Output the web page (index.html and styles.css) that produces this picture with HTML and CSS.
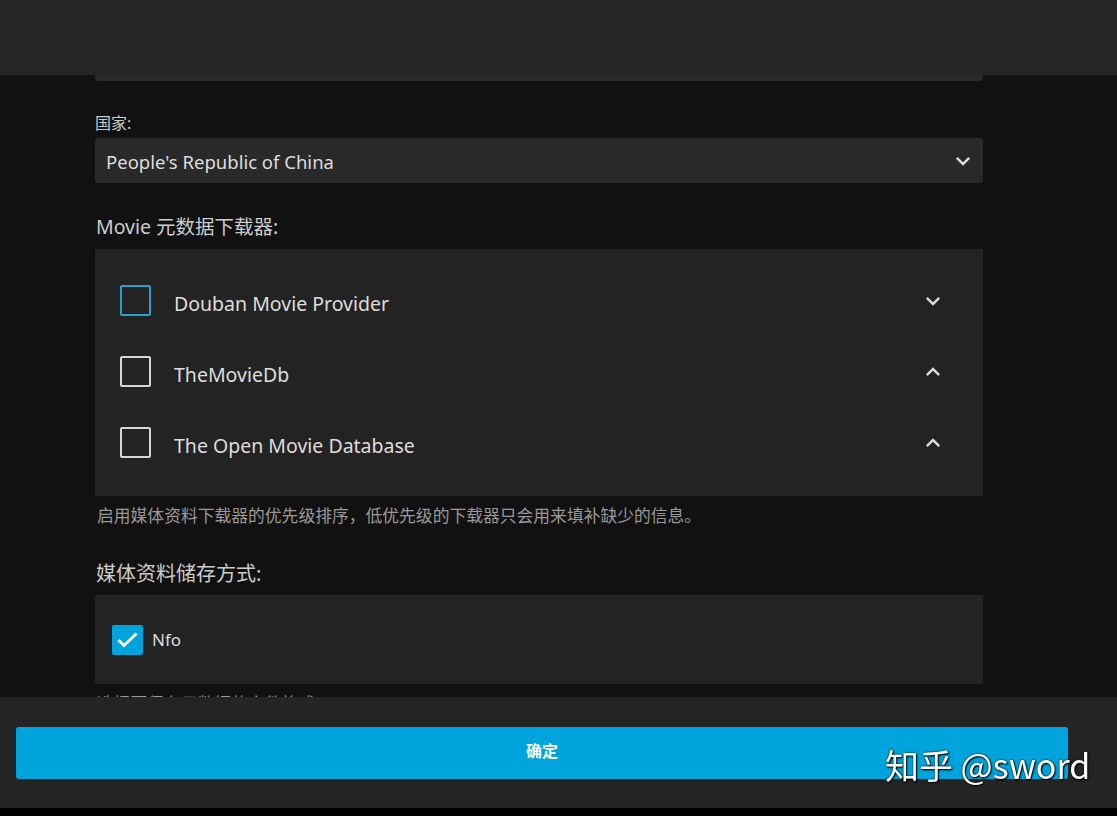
FILE: index.html
```html
<!DOCTYPE html>
<html lang="zh-CN">
<head>
    <meta charset="UTF-8">
    <meta name="viewport" content="width=device-width, initial-scale=1.0">
    <title>媒体库设置</title>
    <link rel="stylesheet" href="styles.css">
</head>
<body>

<div class="header"></div>

<div class="content">
    <div class="field-stub"></div>

    <label class="field-label">国家:</label>
    <div class="select">
        <span>People's Republic of China</span>
        <svg class="chevron" viewBox="0 0 24 24"><path d="M16.59 8.59L12 13.17 7.41 8.59 6 10l6 6 6-6z"/></svg>
    </div>

    <h3 class="section-title">Movie 元数据下载器:</h3>
    <div class="check-list">
        <div class="check-row">
            <span class="checkbox checkbox-focus"></span>
            <span class="check-text">Douban Movie Provider</span>
            <svg class="chevron row-chevron" viewBox="0 0 24 24"><path d="M16.59 8.59L12 13.17 7.41 8.59 6 10l6 6 6-6z"/></svg>
        </div>
        <div class="check-row">
            <span class="checkbox"></span>
            <span class="check-text">TheMovieDb</span>
            <svg class="chevron row-chevron" viewBox="0 0 24 24"><path d="M12 8l-6 6 1.41 1.41L12 10.83l4.59 4.58L18 14z"/></svg>
        </div>
        <div class="check-row">
            <span class="checkbox"></span>
            <span class="check-text">The Open Movie Database</span>
            <svg class="chevron row-chevron" viewBox="0 0 24 24"><path d="M12 8l-6 6 1.41 1.41L12 10.83l4.59 4.58L18 14z"/></svg>
        </div>
    </div>
    <p class="help">启用媒体资料下载器的优先级排序，低优先级的下载器只会用来填补缺少的信息。</p>

    <h3 class="section-title section-title-2">媒体资料储存方式:</h3>
    <div class="check-list check-list-small">
        <div class="check-row-small">
            <span class="checkbox checkbox-on">
                <svg viewBox="0 0 31 30"><polyline points="6.5,15 12,20.5 24.5,8.5"/></svg>
            </span>
            <span class="check-text-small">Nfo</span>
        </div>
    </div>
    <p class="help">选择要保存元数据的文件格式。</p>
</div>

<div class="footer">
    <button type="button" class="btn-ok">确定</button>
</div>

<div class="watermark">知乎 @sword</div>

</body>
</html>
```

FILE: styles.css
```css
body {
    font-family: "Noto Sans", "Noto Sans CJK SC", sans-serif;
    background-color: #111111;
    color: #dddddd;
    margin: 0px;
    padding: 0px;
    overflow: hidden;
}
.header {
    position: fixed;
    top: 0;
    left: 0;
    right: 0;
    height: 75px;
    background-color: #252525;
    z-index: 2;
}
.content {
    width: 888px;
    margin-left: 95px;
    padding-top: 36px;
}
.field-stub {
    height: 45px;
    background-color: #292929;
    border-radius: 3px;
}
.field-label {
    display: block;
    margin-top: 31px;
    margin-bottom: 4px;
    font-size: 16px;
    line-height: 22px;
    color: #cccccc;
}
.select {
    height: 45px;
    background-color: #292929;
    border-radius: 3px;
    display: flex;
    align-items: center;
    padding: 1px 6px 0 11px;
    box-sizing: border-box;
    font-size: 18.5px;
    color: #dddddd;
}
.select span {
    flex: 1;
}
.chevron {
    width: 28px;
    height: 28px;
    fill: #e0e0e0;
}
.section-title {
    margin: 31px 0 9px 1px;
    font-size: 19.5px;
    line-height: 26px;
    font-weight: normal;
    color: #cccccc;
}
.section-title-2 {
    margin-top: 33px;
    margin-bottom: 8px;
    font-size: 20px;
}
.check-list {
    background-color: #232323;
    padding: 16px 0 18px 0;
}
.check-row {
    height: 71px;
    display: flex;
    align-items: center;
    padding-left: 25px;
    padding-right: 36px;
}
.checkbox {
    width: 31px;
    height: 31px;
    box-sizing: border-box;
    border: 2px solid #d6d6d6;
    border-radius: 2px;
    flex-shrink: 0;
}
.checkbox-focus {
    border-color: #2a9fd0;
}
.check-text {
    flex: 1;
    margin-left: 23px;
    padding-top: 6px;
    font-size: 19.5px;
    color: #dddddd;
}
.row-chevron {
    fill: #dddddd;
}
.check-list-small {
    height: 89px;
    padding: 0;
    display: flex;
    align-items: center;
}
.check-row-small {
    display: flex;
    align-items: center;
    padding-left: 17px;
}
.checkbox-on {
    height: 30px;
    border: none;
    background-color: #00a4dc;
}
.checkbox-on svg {
    display: block;
    width: 31px;
    height: 30px;
    fill: none;
    stroke: white;
    stroke-width: 3;
}
.check-text-small {
    margin-left: 9px;
    font-size: 17px;
    color: #dddddd;
}
.help {
    margin: 8px 0 0 2px;
    font-size: 16.8px;
    line-height: 24px;
    color: #999999;
}
.footer {
    position: fixed;
    left: 0;
    right: 0;
    bottom: 0;
    height: 111px;
    background-color: #242424;
    border-bottom: 8px solid #000000;
    z-index: 2;
}
.btn-ok {
    display: block;
    margin: 30px 0 0 16px;
    width: 1052px;
    height: 52px;
    padding: 0 0 7px 0;
    border: none;
    border-radius: 3px;
    background-color: #00a4dc;
    color: white;
    font-family: "Noto Sans", "Noto Sans CJK SC", sans-serif;
    font-size: 16px;
    font-weight: bold;
}
.watermark {
    position: fixed;
    left: 885px;
    top: 743px;
    font-family: "Noto Sans CJK SC", sans-serif;
    font-size: 34px;
    line-height: 44px;
    color: white;
    text-shadow: 1px 1px 2px #000000, 0 0 2px #000000;
    z-index: 3;
}
```
